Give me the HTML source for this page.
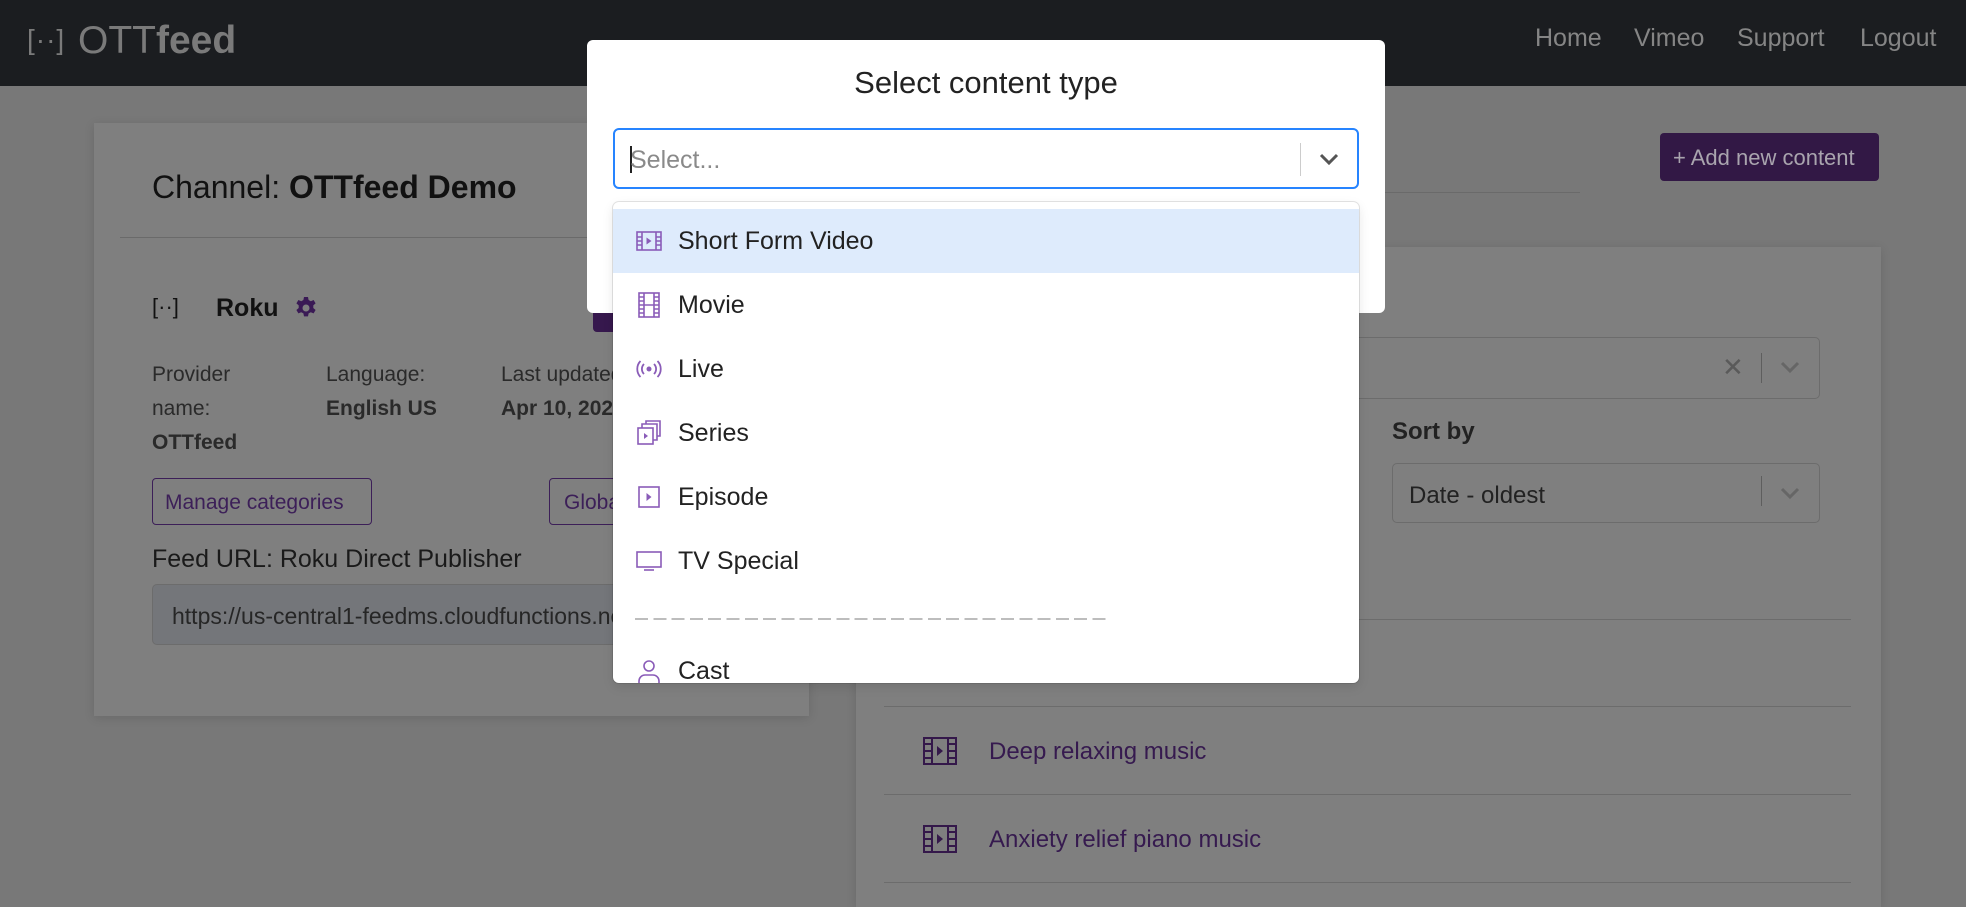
<!DOCTYPE html>
<html><head><meta charset="utf-8"><style>
*{box-sizing:border-box;margin:0;padding:0}
body{width:1966px;height:894px;overflow:hidden;background:#787878;font-family:"Liberation Sans",sans-serif;position:relative;color:#1c1c1c}
.abs{position:absolute}
.nav{left:0;top:0;width:1966px;height:86px;background:#1b1d20}
.navlink{top:24px;font-size:25px;color:#858585}
.card{background:#7f7f7f;box-shadow:0 2px 10px rgba(0,0,0,.12)}
.lbl{font-size:21px;color:#2a2a2a}
.b{font-weight:bold}
.ddi{left:0;width:746px;height:64px;display:flex;align-items:center;font-size:25px;color:#222}
.ddi svg{margin-left:23px;margin-right:16px;width:26px;height:26px}
</style></head><body>
<div class="abs nav"></div>
<div class="abs" style="left:27px;top:24px;font-size:28px;color:#7a7a7a;letter-spacing:1px">[··]</div>
<div class="abs" style="left:78px;top:19px;font-size:39px;color:#7a7a7a">OTT<b>feed</b></div>
<div class="abs navlink" style="left:1535px">Home</div>
<div class="abs navlink" style="left:1634px">Vimeo</div>
<div class="abs navlink" style="left:1737px">Support</div>
<div class="abs navlink" style="left:1860px">Logout</div>

<!-- left card -->
<div class="abs card" style="left:94px;top:123px;width:715px;height:593px"></div>
<div class="abs" style="left:152px;top:169px;font-size:32px;color:#111">Channel: <b>OTTfeed Demo</b></div>
<div class="abs" style="left:120px;top:237px;width:480px;height:1px;background:#6a6a6a"></div>
<div class="abs" style="left:152px;top:294px;font-size:22px;color:#111">[··]</div>
<div class="abs b" style="left:216px;top:294px;font-size:25px;color:#111">Roku</div>
<svg class="abs" style="left:294px;top:296px" width="24" height="24" viewBox="0 0 24 24"><path fill="#3a1a55" d="M10 1h4l.6 3 2.2 1.2 2.8-1.2 2 3.4-2.3 2v2.6l2.3 2-2 3.4-2.8-1.2-2.2 1.2-.6 3h-4l-.6-3-2.2-1.2-2.8 1.2-2-3.4 2.3-2v-2.6l-2.3-2 2-3.4 2.8 1.2L9.4 4z"/><circle cx="12" cy="12" r="3.5" fill="#7f7f7f"/></svg>
<div class="abs" style="left:593px;top:307px;width:30px;height:25px;background:#36184d;border-radius:4px"></div>
<div class="abs lbl" style="left:152px;top:358px;line-height:34px">Provider<br>name:<br><b>OTTfeed</b></div>
<div class="abs lbl" style="left:326px;top:358px;line-height:34px">Language:<br><b>English US</b></div>
<div class="abs lbl" style="left:501px;top:358px;line-height:34px">Last updated:<br><b>Apr 10, 2023</b></div>
<div class="abs" style="left:152px;top:478px;width:220px;height:47px;border:1px solid #3c1f58;border-radius:4px;font-size:21px;color:#3c1f58;padding:12px 0 0 12px">Manage categories</div>
<div class="abs" style="left:549px;top:478px;width:120px;height:47px;border:1px solid #3c1f58;border-radius:4px;font-size:21px;color:#3c1f58;padding:12px 0 0 14px">Global</div>
<div class="abs" style="left:152px;top:545px;font-size:25px;color:#1a1a1a">Feed URL: Roku Direct Publisher</div>
<div class="abs" style="left:152px;top:584px;width:600px;height:61px;background:#74767a;border:1px solid #6c6c6c;border-radius:5px;font-size:23px;color:#262626;padding:18px 0 0 19px;white-space:nowrap;overflow:hidden">https://us-central1-feedms.cloudfunctions.net</div>

<!-- right -->
<div class="abs" style="left:1660px;top:133px;width:219px;height:48px;background:#321845;border-radius:4px;font-size:22px;color:#a9a4ae;padding:12px 0 0 13px">+ Add new content</div>
<div class="abs" style="left:1380px;top:192px;width:200px;height:1px;background:#6a6a6a"></div>
<div class="abs card" style="left:856px;top:247px;width:1025px;height:660px"></div>
<div class="abs" style="left:1300px;top:337px;width:520px;height:62px;border:1px solid #6c6c6c;border-radius:5px"></div>
<div class="abs" style="left:1722px;top:352px;font-size:26px;color:#5a5a5a">✕</div>
<div class="abs" style="left:1761px;top:353px;width:1px;height:30px;background:#5e5e5e"></div>
<svg class="abs" style="left:1779px;top:359px" width="22" height="16"><path d="M3 4l8 8 8-8" stroke="#666" stroke-width="3" fill="none"/></svg>
<div class="abs b" style="left:1392px;top:418px;font-size:24px;color:#222">Sort by</div>
<div class="abs" style="left:1392px;top:463px;width:428px;height:60px;border:1px solid #6c6c6c;border-radius:5px;font-size:24px;color:#222;padding:18px 0 0 16px">Date - oldest</div>
<div class="abs" style="left:1761px;top:476px;width:1px;height:30px;background:#5e5e5e"></div>
<svg class="abs" style="left:1779px;top:485px" width="22" height="16"><path d="M3 4l8 8 8-8" stroke="#666" stroke-width="3" fill="none"/></svg>
<div class="abs" style="left:884px;top:619px;width:967px;height:1px;background:#6c6c6c"></div>
<div class="abs" style="left:884px;top:706px;width:967px;height:1px;background:#6c6c6c"></div>
<div class="abs" style="left:884px;top:794px;width:967px;height:1px;background:#6c6c6c"></div>
<div class="abs" style="left:884px;top:882px;width:967px;height:1px;background:#6c6c6c"></div>
<svg class="abs" style="left:923px;top:737px" width="34" height="28" viewBox="0 0 34 28"><g stroke="#34184a" stroke-width="2" fill="none"><rect x="1" y="1" width="32" height="26"/><path d="M9 1v26M25 1v26M1 7h8M1 14h8M1 21h8M25 7h8M25 14h8M25 21h8"/></g><path d="M14 9l6 5-6 5z" fill="#34184a"/></svg>
<div class="abs" style="left:989px;top:738px;font-size:24px;color:#361a4f">Deep relaxing music</div>
<svg class="abs" style="left:923px;top:825px" width="34" height="28" viewBox="0 0 34 28"><g stroke="#34184a" stroke-width="2" fill="none"><rect x="1" y="1" width="32" height="26"/><path d="M9 1v26M25 1v26M1 7h8M1 14h8M1 21h8M25 7h8M25 14h8M25 21h8"/></g><path d="M14 9l6 5-6 5z" fill="#34184a"/></svg>
<div class="abs" style="left:989px;top:826px;font-size:24px;color:#361a4f">Anxiety relief piano music</div>

<!-- modal -->
<div class="abs" style="left:587px;top:40px;width:798px;height:273px;background:#fff;border-radius:6px"></div>
<div class="abs" style="left:587px;top:65px;width:798px;text-align:center;font-size:31px;color:#222">Select content type</div>
<div class="abs" style="left:613px;top:128px;width:746px;height:61px;border:2px solid #2684ff;border-radius:6px"></div>
<div class="abs" style="left:630px;top:146px;width:2px;height:27px;background:#222"></div>
<div class="abs" style="left:630px;top:146px;font-size:25px;color:#8a8a8a">Select...</div>
<div class="abs" style="left:1300px;top:143px;width:1px;height:33px;background:#ccc"></div>
<svg class="abs" style="left:1318px;top:151px" width="22" height="16"><path d="M3 4l8 8 8-8" stroke="#555" stroke-width="3" fill="none"/></svg>

<div class="abs" style="left:613px;top:202px;width:746px;height:481px;background:#fff;border-radius:6px;box-shadow:0 0 0 1px rgba(0,0,0,.1),0 4px 11px rgba(0,0,0,.1);overflow:hidden">
 <div class="abs ddi" style="top:7px;background:#deebfc"><svg viewBox="0 0 26 26"><g stroke="#8a5cb8" stroke-width="1.6" fill="none"><rect x="1" y="4" width="24" height="18"/><path d="M6 4v18M20 4v18M1 9h5M1 13h5M1 17h5M20 9h5M20 13h5M20 17h5"/></g><path d="M10.5 9.5l5 3.5-5 3.5z" fill="#8a5cb8"/></svg><span>Short Form Video</span></div>
 <div class="abs ddi" style="top:71px"><svg viewBox="0 0 26 26"><g stroke="#8a5cb8" stroke-width="1.6" fill="none"><rect x="3" y="1" width="20" height="24"/><path d="M8 1v24M18 1v24M3 5h5M3 9h5M3 13h5M3 17h5M3 21h5M18 5h5M18 9h5M18 13h5M18 17h5M18 21h5M8 13h10"/></g></svg><span>Movie</span></div>
 <div class="abs ddi" style="top:135px"><svg viewBox="0 0 26 26"><g stroke="#8a5cb8" stroke-width="1.8" fill="none"><path d="M8 8a7 7 0 0 0 0 10M18 8a7 7 0 0 1 0 10M4.5 5a11.5 11.5 0 0 0 0 16M21.5 5a11.5 11.5 0 0 1 0 16"/></g><circle cx="13" cy="13" r="2.5" fill="#8a5cb8"/></svg><span>Live</span></div>
 <div class="abs ddi" style="top:199px"><svg viewBox="0 0 26 26"><g stroke="#8a5cb8" stroke-width="1.6" fill="none"><rect x="2" y="8" width="15" height="16"/><path d="M6 8V4h15v16h-4M10 4V1h14v15h-3"/></g><path d="M8 13l4 3-4 3z" fill="#8a5cb8"/></svg><span>Series</span></div>
 <div class="abs ddi" style="top:263px"><svg viewBox="0 0 26 26"><rect x="3" y="3" width="20" height="20" stroke="#8a5cb8" stroke-width="1.6" fill="none"/><path d="M10.5 9l5 4-5 4z" fill="#8a5cb8"/></svg><span>Episode</span></div>
 <div class="abs ddi" style="top:327px"><svg viewBox="0 0 26 26"><g stroke="#8a5cb8" stroke-width="1.6" fill="none"><rect x="1" y="4" width="24" height="15"/><path d="M8 22h10"/></g></svg><span>TV Special</span></div>
 <div class="abs" style="left:22px;top:416px;width:475px;height:2px;background:repeating-linear-gradient(90deg,#bdbdbd 0 13px,transparent 13px 18.3px)"></div>
 <div class="abs ddi" style="top:437px"><svg viewBox="0 0 26 26"><g stroke="#8a5cb8" stroke-width="1.6" fill="none"><circle cx="13" cy="8" r="5"/><path d="M3 26v-3a6 6 0 0 1 6-6h8a6 6 0 0 1 6 6v3"/></g></svg><span>Cast</span></div>
</div>
</body></html>
